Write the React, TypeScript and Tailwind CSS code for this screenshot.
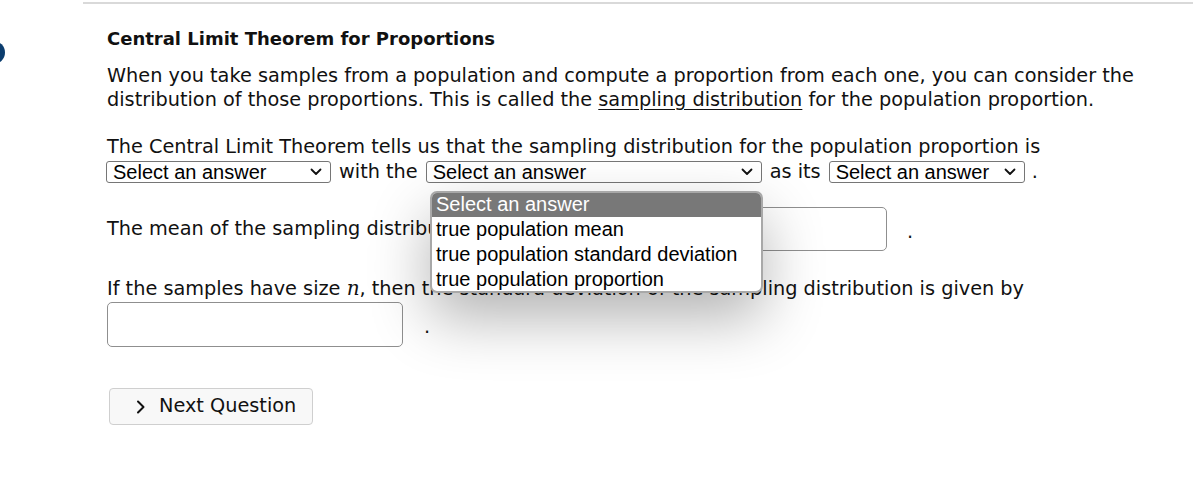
import React from "react";

const Chevron = () => (
  <svg width="12" height="8" viewBox="0 0 12 8" className="shrink-0">
    <path d="M1.5 1.5 L6 6 L10.5 1.5" fill="none" stroke="#111" strokeWidth="1.8" strokeLinecap="round" strokeLinejoin="round" />
  </svg>
);

const FakeSelect = ({ w }: { w: string }) => (
  <span
    className={`inline-flex items-center justify-between h-[22px] ${w} border border-[#767676] rounded-[3px] bg-white pl-[6px] pr-[8px] align-middle font-['Liberation_Sans',Arial,sans-serif] text-[20px] leading-[20px] text-black`}
  >
    <span>Select an answer</span>
    <Chevron />
  </span>
);

export default function App() {
  return (
    <div className="relative w-full h-[477px] bg-white overflow-hidden font-['DejaVu_Sans',Verdana,sans-serif] text-[#111]">
      <div className="absolute left-[-19px] top-[41px] w-[24px] h-[23px] rounded-full bg-[#0b3d6e]" />
      <div className="ml-[83px] mt-[2px] border-t-[2px] border-[#d9d9d9]">
        <div className="pl-[24px] pt-[23px]">
          <h3 className="font-bold text-[18px] leading-[24px] text-[#111] whitespace-nowrap">
            Central Limit Theorem for Proportions
          </h3>
          <p className="mt-[13px] text-[19.3px] leading-[24px] whitespace-nowrap">
            When you take samples from a population and compute a proportion from each one, you can consider the
            <br />
            distribution of those proportions. This is called the{" "}
            <span className="underline underline-offset-[3px]">sampling distribution</span> for the population proportion.
          </p>
          <div className="mt-[23px] text-[19.3px] leading-[24px] whitespace-nowrap">
            <div>The Central Limit Theorem tells us that the sampling distribution for the population proportion is</div>
            <div className="flex items-center h-[26px] -ml-[1px]">
              <FakeSelect w="w-[225px]" />
              <span className="mx-[8px]">with the</span>
              <FakeSelect w="w-[336px]" />
              <span className="mx-[8px]">as its</span>
              <FakeSelect w="w-[196px]" />
              <span className="ml-[7px]">.</span>
            </div>
          </div>
          <div className="mt-[22px] flex items-center text-[19.3px] leading-[24px] whitespace-nowrap">
            <span>The mean of the sampling distribution is</span>
            <span className="ml-[11px] w-[378px] h-[44px] border border-[#8f8f8f] rounded-[5px] bg-white" />
            <span className="ml-[20px] mt-[6px]">.</span>
          </div>
          <div className="mt-[25px] text-[19.3px] leading-[24px] whitespace-nowrap">
            If the samples have size{" "}
            <span className="italic font-['DejaVu_Serif',serif] text-[20px]">n</span>, then the standard deviation of the sampling distribution is given by
          </div>
          <div className="mt-[1px] flex items-center">
            <span className="w-[296px] h-[45px] border border-[#8f8f8f] rounded-[5px] bg-white" />
            <span className="ml-[21px] mt-[6px] text-[19.3px]">.</span>
          </div>
          <button className="mt-[41px] ml-[2px] flex items-center h-[37px] w-[204px] border border-[#cfcfcf] rounded-[4px] bg-[#f8f8f8] pl-[26px] text-[19.3px] text-[#111]">
            <svg width="10" height="14" viewBox="0 0 10 14" className="mr-[13px]">
              <path d="M2 1.5 L7.5 7 L2 12.5" fill="none" stroke="#111" strokeWidth="2" strokeLinecap="round" strokeLinejoin="round" />
            </svg>
            Next Question
          </button>
        </div>
      </div>

      <div className="absolute left-[430px] top-[191px] w-[333px] rounded-[7px] border-[2px] border-[#a8a8a8] bg-white overflow-hidden shadow-[0_25px_60px_rgba(0,0,0,0.3)] font-['Liberation_Sans',Arial,sans-serif] text-[20px] leading-[25px] text-black">
        <div className="bg-[#787878] text-white pl-[4px] h-[24px] leading-[23px]">Select an answer</div>
        <div className="pl-[4px]">true population mean</div>
        <div className="pl-[4px]">true population standard deviation</div>
        <div className="pl-[4px] leading-[24px]">true population proportion</div>
      </div>
    </div>
  );
}
